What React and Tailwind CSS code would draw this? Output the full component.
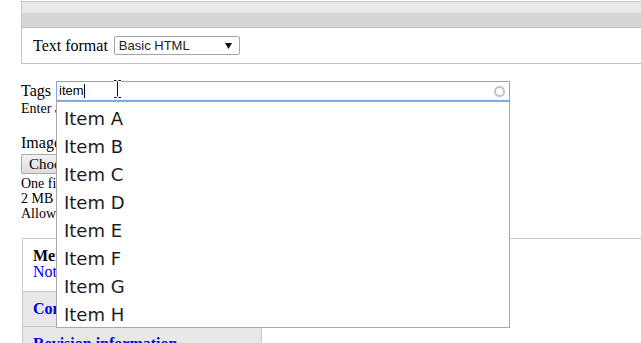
import React from 'react'

export default function App() {

  const items = ["Item A", "Item B", "Item C", "Item D", "Item E", "Item F", "Item G", "Item H"];

  return (
    <div className="w-[641px] h-[343px] overflow-hidden bg-white relative font-['Liberation_Serif',serif] text-black">
      <div className="pl-[21px] pt-px">
        {/* text format box */}
        <div className="border-l border-y border-[#c4c4c4]">
          <div className="h-[26px] border-b border-[#bdbdbd] bg-[linear-gradient(#e9e9e9_0%,#e9e9e9_38%,#d6d6d6_50%,#d6d6d6_100%)]" />
          <div className="h-[35px] pl-[11px] flex items-center text-[16px]">
            <span>Text format</span>
            <div className="ml-[6px] w-[126px] h-[19px] border border-[#a6a6a6] rounded-[2px] flex items-center justify-between pl-[4px] pr-[7px] font-['Liberation_Sans',sans-serif] text-[13px] text-[#222]">
              <span>Basic HTML</span>
              <svg width="7" height="6" viewBox="0 0 7 6"><path d="M0 0h7L3.5 6z" fill="#111" /></svg>
            </div>
          </div>
        </div>

        {/* tags */}
        <div className="mt-[17px] flex items-start text-[16px]">
          <span className="leading-[20px] w-[35px]">Tags</span>
          <div className="relative w-[454px] h-[20px] border border-[#7ea6dc] bg-white flex items-center pl-[2px] font-['Liberation_Sans',sans-serif] text-[13px]">
            <span>item</span>
            <span className="w-px h-[14px] bg-black" />
            <span className="absolute right-[4px] top-[4px] w-[11px] h-[11px] rounded-full border-2 border-[#c2c2c2]" />
            <ul className="absolute left-[-1px] top-[19px] w-[454px] border border-[#a8a8a8] bg-white z-10 pt-px font-['DejaVu_Sans',sans-serif] text-[18px] text-[#1c1c1c]">
              {items.map((item) => (
                <li key={item} className="h-[28px] leading-[31px] pl-[7px]">{item}</li>
              ))}
            </ul>
          </div>
        </div>
        <div className="text-[14px] leading-[15px]">Enter a comma-separated list of words to describe your content.</div>

        {/* image */}
        <div className="mt-[18px] text-[16px] leading-[18px]">Image</div>
        <button className="mt-[1px] h-[20px] px-[7px] border border-[#a9a9a9] rounded-[2px] bg-[linear-gradient(#f2f2f2,#dedede)] text-[15px] leading-[18px] font-['Liberation_Serif',serif]">Choose File</button>
        <div className="text-[14px] leading-[15px]">
          <div>One file only.</div>
          <div>2 MB limit.</div>
          <div>Allowed types: png gif jpg jpeg.</div>
        </div>

        {/* vertical tabs */}
        <div className="mt-[17px] ml-px border-t border-l border-[#c8c8c8] flex">
          <ul className="w-[239px] text-[16px] leading-[16px]">
            <li className="bg-white pl-[10px] pt-[9px] pb-[11px] border-b border-[#c8c8c8]">
              <div className="font-bold">Menu settings</div>
              <div className="text-[#0000ee]">Not in menu</div>
            </li>
            <li className="bg-[#e8e8e8] pl-[10px] pt-[9px] pb-[9px] border-b border-r border-[#c8c8c8] font-bold text-[#0000ee]">Comment settings</li>
            <li className="bg-[#e8e8e8] pl-[10px] pt-[9px] pb-[9px] border-r border-[#c8c8c8] font-bold text-[#0000ee]">Revision information</li>
          </ul>
          <div className="flex-1" />
        </div>
      </div>

      {/* mouse cursor */}
      <svg className="absolute left-[113px] top-[79px] z-20" width="9" height="20" viewBox="0 0 9 20">
        <path d="M1 1.5h2.5M5.5 1.5h2.5M4.5 2.5v15M1 18.5h2.5M5.5 18.5h2.5" stroke="#fff" strokeWidth="3" />
        <path d="M1 1.5h2.5M5.5 1.5h2.5M4.5 2.5v15M1 18.5h2.5M5.5 18.5h2.5" stroke="#111" strokeWidth="1" />
      </svg>
    </div>
  )
}
